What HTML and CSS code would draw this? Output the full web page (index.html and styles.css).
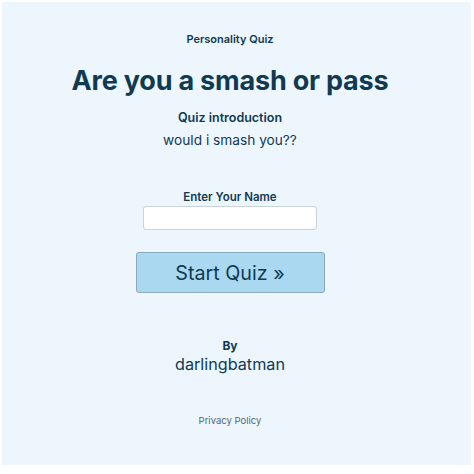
FILE: index.html
```html
<!DOCTYPE html>
<html>
<head>
<meta charset="utf-8">
<link rel="stylesheet" href="styles.css">
</head>
<body>
<main class="panel">
  <p class="kicker">Personality Quiz</p>
  <h1 class="title">Are you a smash or pass</h1>
  <p class="intro-label">Quiz introduction</p>
  <p class="intro-text">would i smash you??</p>
  <form class="form">
    <label class="name-label" for="name">Enter Your Name</label>
    <input class="name-input" id="name" type="text">
    <button class="start" type="button">Start Quiz »</button>
  </form>
  <p class="by">By</p>
  <p class="author">darlingbatman</p>
  <a class="privacy" href="#">Privacy Policy</a>
</main>
</body>
</html>
```
FILE: styles.css
```css
html, body {
  margin: 0;
  padding: 0;
  background: #ffffff;
}
body {
  padding: 2px 3px 0 2px;
  font-family: Inter, "Noto Sans", sans-serif;
  color: #0f3a52;
}
.panel {
  background: #eef6fd;
  height: 463px;
  display: flex;
  flex-direction: column;
  align-items: center;
  box-sizing: border-box;
  padding: 30px 13px 0 0;
}
p { margin: 0; }
.kicker {
  font-size: 11px;
  font-weight: 600;
  line-height: 14px;
}
.title {
  margin: 18px 0 0;
  font-size: 27px;
  font-weight: 700;
  line-height: 34px;
  letter-spacing: -0.2px;
}
.intro-label {
  margin-top: 12px;
  font-size: 12.5px;
  font-weight: 600;
  line-height: 16px;
}
.intro-text {
  margin-top: 5px;
  font-size: 13.7px;
  line-height: 18px;
}
.form {
  margin-top: 41px;
  display: flex;
  flex-direction: column;
  align-items: center;
}
.name-label {
  font-size: 11.5px;
  font-weight: 600;
  line-height: 14px;
}
.name-input {
  margin-top: 2px;
  width: 174px;
  height: 24px;
  box-sizing: border-box;
  border: 1px solid #c9d3da;
  border-radius: 3px;
  background: #ffffff;
}
.start {
  margin-top: 22px;
  width: 189px;
  height: 41px;
  box-sizing: border-box;
  background: #a9d8f0;
  border: 1px solid #8da9b9;
  border-radius: 3px;
  font-family: Inter, "Noto Sans", sans-serif;
  font-size: 19.7px;
  color: #0f3a52;
  padding: 0;
}
.by {
  margin-top: 45px;
  font-size: 12px;
  font-weight: 700;
  line-height: 16px;
}
.author {
  margin-top: 0;
  font-size: 16.2px;
  line-height: 20px;
}
.privacy {
  margin-top: 41px;
  font-size: 9.5px;
  color: #4f6775;
  text-decoration: none;
  line-height: 12px;
}
```
